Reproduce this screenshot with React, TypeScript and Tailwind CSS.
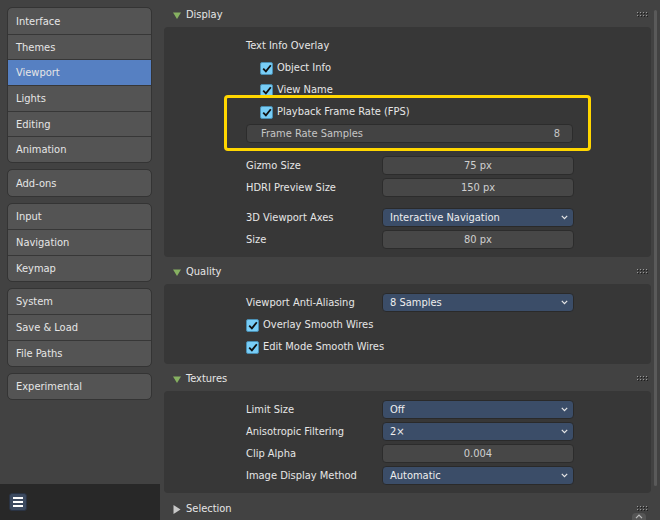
// Blender Preferences · Viewport · recreated with Tailwind.

import type { ReactNode } from 'react'

const FONT = 'font-["DejaVu_Sans_Condensed","DejaVu_Sans",sans-serif] font-stretch-condensed'

const grupos: string[][] = [
  ['Interface', 'Themes', 'Viewport', 'Lights', 'Editing', 'Animation'],
  ['Add-ons'],
  ['Input', 'Navigation', 'Keymap'],
  ['System', 'Save & Load', 'File Paths'],
  ['Experimental'],
]

function Grip() {
  return (
    <svg width="11" height="6" viewBox="0 0 11 6" className="shrink-0">
      {[0, 3, 6, 9].map((x) =>
        [0, 3].map((y) => (
          <g key={`${x}-${y}`}>
            <rect x={x} y={y} width="1" height="1" fill="#9a9a9a" />
            <rect x={x + 1} y={y + 1} width="1" height="1" fill="#1c1c1c" />
          </g>
        )),
      )}
    </svg>
  )
}

function Header({ titulo, abierto = true }: { titulo: string; abierto?: boolean }) {
  return (
    <div className="h-[27px] flex items-center pt-[3px] pl-[13px] pr-[6px]">
      {abierto ? (
        <svg width="8" height="7" viewBox="0 0 8 7" className="mr-[5px]">
          <path d="M0 0.5 L8 0.5 L4 7 Z" fill="#86b061" />
        </svg>
      ) : (
        <svg width="8" height="9" viewBox="0 0 8 9" className="mr-[5px]">
          <path d="M0.5 0 L7.5 4.5 L0.5 9 Z" fill="#c8c8c8" />
        </svg>
      )}
      <span className="text-[#e6e6e6] text-[11px] flex-1">{titulo}</span>
      <Grip />
    </div>
  )
}

function Cuerpo({ children, className = '' }: { children: ReactNode; className?: string }) {
  return <div className={`ml-[4px] mr-[3px] rounded-[4px] bg-[#373737] ${className}`}>{children}</div>
}

function Check({ label, indent = 96 }: { label: string; indent?: number }) {
  return (
    <div className="h-[22px] pt-[2px] flex items-center" style={{ paddingLeft: indent }}>
      <span className="w-[13px] h-[13px] rounded-[2px] bg-[#78cdf6] border border-[#4a8fb3] grid place-items-center">
        <svg width="10" height="9" viewBox="0 0 10 9">
          <path d="M1.2 4.6 L3.9 7.3 L8.8 1.3" fill="none" stroke="#111" strokeWidth="1.8" />
        </svg>
      </span>
      <span className="ml-[4px] text-[#e6e6e6] text-[11px]">{label}</span>
    </div>
  )
}

function Fila({ label, children }: { label: string; children: ReactNode }) {
  return (
    <div className="h-[22px] flex items-center pl-[82px]">
      <span className="w-[136px] pt-[2px] text-[#e6e6e6] text-[11px]">{label}</span>
      {children}
    </div>
  )
}

function Numero({ valor }: { valor: string }) {
  return (
    <div className="w-[192px] h-[19px] pt-[2px] rounded-[4px] bg-[#474747] border border-[#2c2c2c] flex items-center justify-center text-[#cfcfcf] text-[11px]">
      {valor}
    </div>
  )
}

function Menu({ valor }: { valor: string }) {
  return (
    <div className="w-[192px] h-[19px] rounded-[4px] bg-[#3b4d68] border border-[#2a2a2a] flex items-center pl-[7px] pr-[5px] text-[#eeeeee] text-[11px]">
      <span className="flex-1 pt-[2px]">{valor}</span>
      <svg width="7" height="5" viewBox="0 0 7 5">
        <path d="M0.8 0.8 L3.5 3.6 L6.2 0.8" fill="none" stroke="#e6e6e6" strokeWidth="1.2" />
      </svg>
    </div>
  )
}

export default function App() {
  return (
    <div className={`w-[660px] h-[520px] flex overflow-hidden bg-[#424242] ${FONT}`}>
      <aside className="w-[160px] flex flex-col">
        <nav className="flex-1 pt-[8px] pl-[8px] pr-[9px] flex flex-col gap-2">
          {grupos.map((g, i) => (
            <div key={i} className="rounded-[4px] outline outline-[#343434] overflow-hidden">
              {g.map((item, j) => (
                <div
                  key={item}
                  className={`h-[25.67px] pt-[2px] flex items-center pl-[8px] text-[11px] text-[#e6e6e6] ${
                    j > 0 ? 'border-t border-[#373737]' : ''
                  } ${item === 'Viewport' ? 'bg-[#5680c2]' : 'bg-[#545454]'}`}
                >
                  {item}
                </div>
              ))}
            </div>
          ))}
        </nav>
        <div className="h-[36px] bg-[#282828] flex items-center pl-[9px]">
          <div className="w-[18px] h-[18px] rounded-[3px] bg-[#3c4a60] border border-[#2a3343] flex flex-col items-center justify-center gap-[2px]">
            <span className="w-[10px] h-[2px] bg-white" />
            <span className="w-[10px] h-[2px] bg-white" />
            <span className="w-[10px] h-[2px] bg-white" />
          </div>
        </div>
      </aside>

      <main className="relative flex-1 overflow-hidden pr-[6px] bg-[#424242]">
        <Header titulo="Display" />
        <Cuerpo className="pt-[7px] pb-[7px]">
          <div className="h-[22px] pt-[2px] flex items-center pl-[82px] text-[#e6e6e6] text-[11px]">Text Info Overlay</div>
          <Check label="Object Info" />
          <Check label="View Name" />
          <div className="relative">
            <Check label="Playback Frame Rate (FPS)" />
            <div className="h-[22px] flex items-center pl-[82px]">
              <div className="w-[327px] h-[19px] pt-[2px] rounded-[4px] bg-[#434343] border border-[#2c2c2c] flex items-center pl-[14px] pr-[12px] text-[#c6c6c6] text-[11px]">
                <span className="flex-1">Frame Rate Samples</span>
                <span>8</span>
              </div>
            </div>
            <div className="absolute left-[60px] top-[-5px] w-[367px] h-[56px] rounded-[4px] border-[3px] border-[#ffd600] pointer-events-none" />
          </div>
          <div className="mt-[10px]">
            <Fila label="Gizmo Size">
              <Numero valor="75 px" />
            </Fila>
            <Fila label="HDRI Preview Size">
              <Numero valor="150 px" />
            </Fila>
          </div>
          <div className="mt-[8px]">
            <Fila label="3D Viewport Axes">
              <Menu valor="Interactive Navigation" />
            </Fila>
            <Fila label="Size">
              <Numero valor="80 px" />
            </Fila>
          </div>
        </Cuerpo>

        <Header titulo="Quality" />
        <Cuerpo className="pt-[7px] pb-[7px]">
          <Fila label="Viewport Anti-Aliasing">
            <Menu valor="8 Samples" />
          </Fila>
          <Check label="Overlay Smooth Wires" indent={82} />
          <Check label="Edit Mode Smooth Wires" indent={82} />
        </Cuerpo>

        <Header titulo="Textures" />
        <Cuerpo className="pt-[7px] pb-[7px]">
          <Fila label="Limit Size">
            <Menu valor="Off" />
          </Fila>
          <Fila label="Anisotropic Filtering">
            <Menu valor="2×" />
          </Fila>
          <Fila label="Clip Alpha">
            <Numero valor="0.004" />
          </Fila>
          <Fila label="Image Display Method">
            <Menu valor="Automatic" />
          </Fila>
        </Cuerpo>

        <div className="mt-[1px]">
          <Header titulo="Selection" abierto={false} />
        </div>

        {/* scrollbar */}
        <div className="absolute left-[494px] top-[10px] w-[3px] h-[476px] rounded-full bg-[#5a5a5a]" />
        {/* pestaña inferior */}
        <div className="absolute left-[472px] top-[513px] w-[14px] h-[8px] rounded-t-[4px] bg-[#555555] flex justify-center pt-[1px]">
          <svg width="8" height="5" viewBox="0 0 8 5">
            <path d="M1 4.2 L4 1.2 L7 4.2" fill="none" stroke="#bdbdbd" strokeWidth="1.2" />
          </svg>
        </div>
      </main>
    </div>
  )
}
